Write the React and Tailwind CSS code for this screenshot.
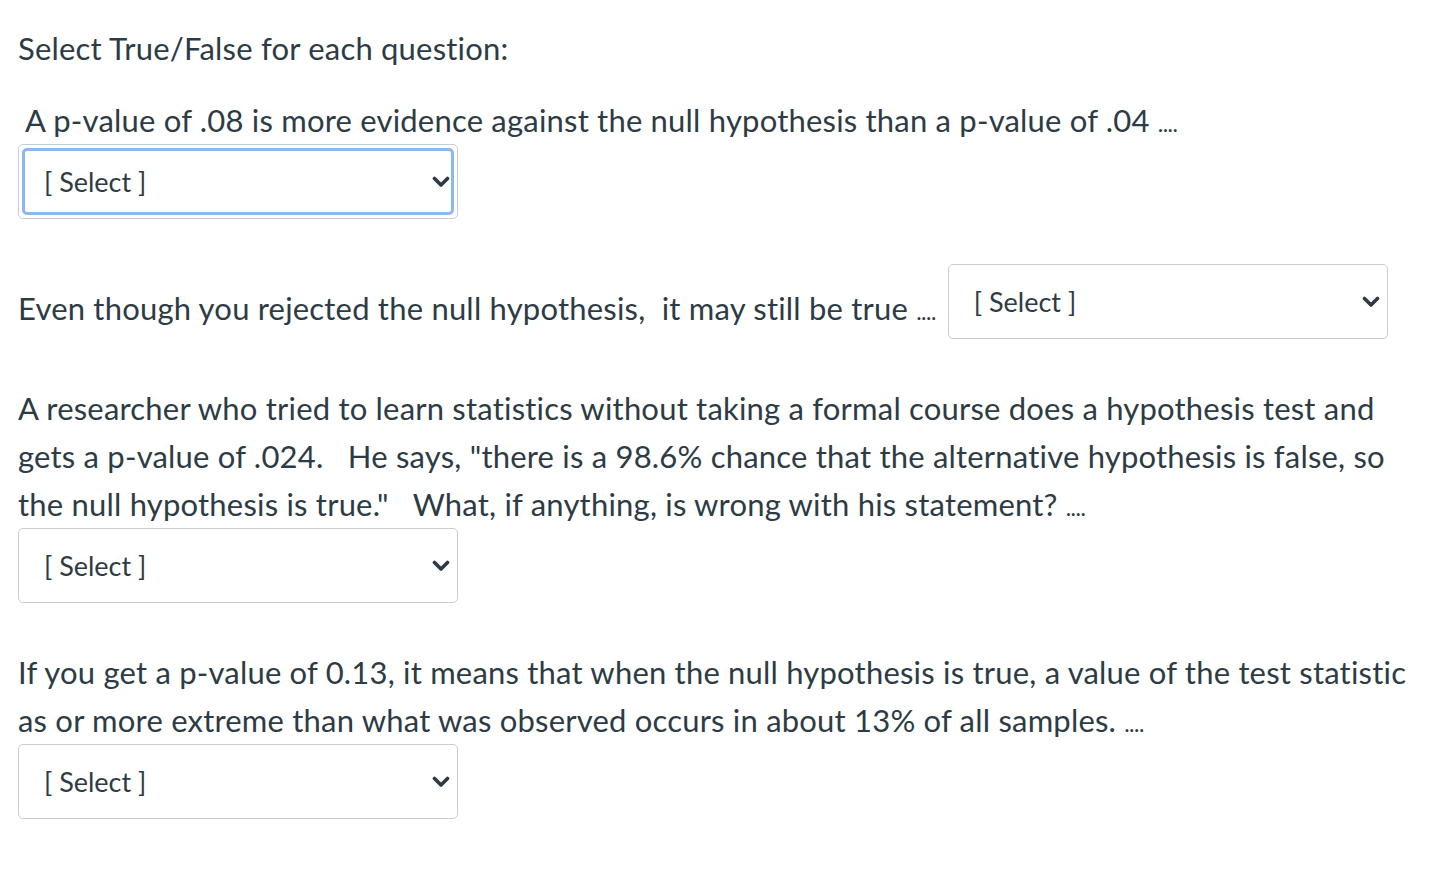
import React from "react";

function Chevron() {
  return (
    <svg width="18" height="12" viewBox="0 0 18 12" className="shrink-0">
      <path d="M2.5 2.5 L9 9 L15.5 2.5" fill="none" stroke="#2d3b45" strokeWidth="3.6" strokeLinecap="round" strokeLinejoin="round" />
    </svg>
  );
}

function SelectBox({ focused = false }) {
  return (
    <div className="relative w-[440px] h-[75px] shrink-0 rounded-[5px] border border-[#c7cdd1] bg-white">
      {focused && (
        <div className="absolute inset-[3px] rounded-[5px] border-[3px] border-[#8cb8f1]" />
      )}
      <div className="relative flex h-full items-center justify-between pl-[25px] pr-[7px]">
        <span className="text-[27px] leading-none tracking-normal text-[#2d3b45]">[ Select ]</span>
        <Chevron />
      </div>
    </div>
  );
}

function Dots() {
  return <span className="ml-[8px] text-[23px] leading-none tracking-[-0.5px]">....</span>;
}

const q3 =
  "A researcher who tried to learn statistics without taking a formal course does a hypothesis test and gets a p-value of .024.\u00a0\u00a0 He says, \"there is a 98.6% chance that the alternative hypothesis is false, so the null hypothesis is true.\"\u00a0\u00a0 What, if anything, is wrong with his statement?";

const q4 =
  "If you get a p-value of 0.13, it means that when the null hypothesis is true, a value of the test statistic as or more extreme than what was observed occurs in about 13% of all samples.";

export default function App() {
  return (
    <div
      className="min-h-[878px] bg-white pl-[18px] pt-[24px] text-[31px] leading-[48px] tracking-[0.2px] text-[#2d3b45]"
      style={{ fontFamily: "Lato, 'Open Sans', sans-serif", fontVariantLigatures: "none" }}
    >
      <p>Select True/False for each question:</p>

      <p className="mt-[24px] pl-[7px]">
        {"A p-value of .08 is more evidence against the null hypothesis than a p-value of .04"}
        <Dots />
      </p>
      <SelectBox focused />

      <div className="mt-[45px] flex items-start">
        <p className="mt-[20px] whitespace-pre">
          {"Even though you rejected the null hypothesis,  it may still be true"}
          <Dots />
        </p>
        <div className="ml-[12px]">
          <SelectBox />
        </div>
      </div>

      <p className="mt-[45px] w-[1400px]">
        {q3}
        <Dots />
      </p>
      <SelectBox />

      <p className="mt-[45px] w-[1400px]">
        {q4}
        <Dots />
      </p>
      <SelectBox />
    </div>
  );
}
